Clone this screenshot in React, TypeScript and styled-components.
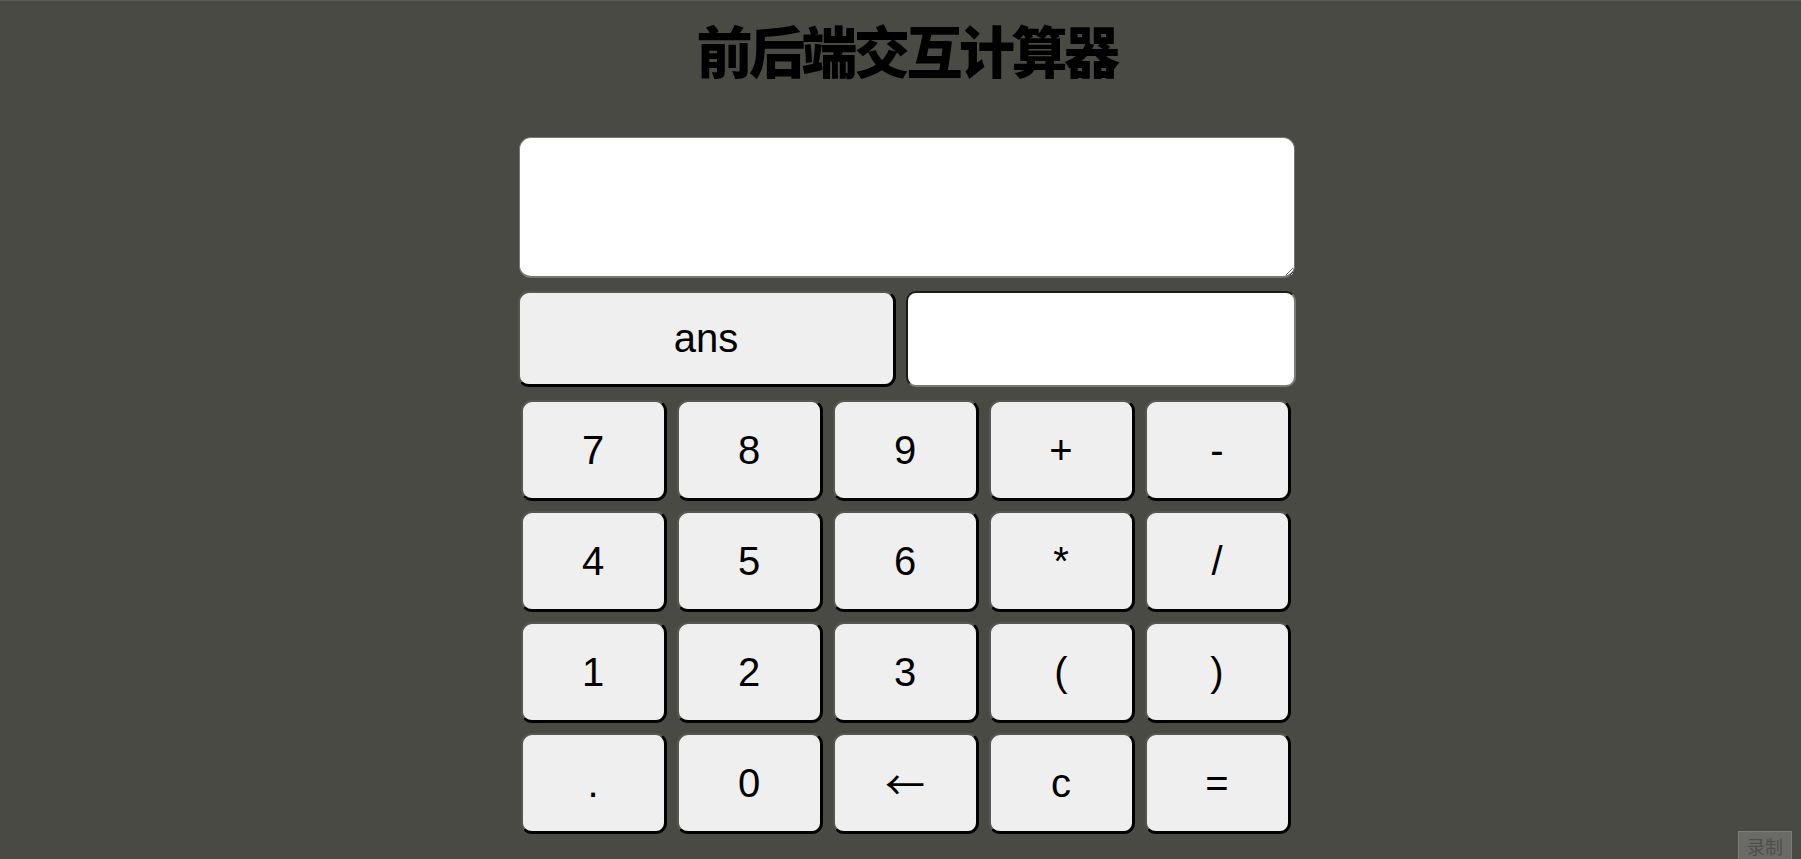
import styled, { createGlobalStyle } from 'styled-components';

const GlobalStyle = createGlobalStyle`
    html, body {
        margin: 0;
        padding: 0;
        height: 100%;
    }
    body {
        background-color: #4a4a45;
        border-top: 1px solid #5c5c57;
        box-sizing: border-box;
        font-family: 'Liberation Sans', Arial, sans-serif;
        overflow: hidden;
    }
`;

const Page = styled.div`
    display: flex;
    flex-direction: column;
    align-items: center;
    padding-left: 12px;
`;

const Title = styled.h1`
    margin: 14px 0 0;
    font-family: 'Noto Sans CJK SC', sans-serif;
    font-size: 56px;
    font-weight: 900;
    line-height: 67px;
    letter-spacing: -3.5px;
    color: #000;
`;

const Calculator = styled.div`
    width: 778px;
    margin-top: 55px;
    display: flex;
    flex-direction: column;
`;

const Screen = styled.textarea`
    box-sizing: border-box;
    width: 776px;
    height: 141px;
    margin-left: 1px;
    border: 1px solid #767676;
    border-bottom-width: 2px;
    border-radius: 12px;
    background: #fff;
    outline: none;
    font-family: 'Liberation Sans', sans-serif;
    font-size: 32px;
`;

const AnsRow = styled.div`
    display: flex;
    gap: 10px;
    margin-top: 13px;
    height: 96px;
`;

const Key = styled.button<{ $wide?: boolean; $symbol?: boolean }>`
    box-sizing: border-box;
    flex-shrink: 0;
    height: ${({ $wide }) => ($wide ? '96px' : '101px')};
    width: ${({ $wide }) => ($wide ? '378px' : '146px')};
    border-style: solid;
    border-width: 2px 3px 3px 2px;
    border-color: #575752 #000 #000 #575752;
    border-radius: 11px;
    background: #efefef;
    color: #000;
    font-family: ${({ $symbol }) =>
        $symbol ? "'Noto Sans CJK SC', 'DejaVu Sans', sans-serif" : "'Liberation Sans', Arial, sans-serif"};
    font-size: 40px;
    padding: 0;
    cursor: pointer;
`;

const AnsField = styled.input`
    box-sizing: border-box;
    flex: 1;
    min-width: 0;
    height: 96px;
    border: 2px solid;
    border-color: #1a1a1a #7a7a76 #7a7a76 #1a1a1a;
    border-radius: 10px;
    background: #fff;
    outline: none;
    font-family: 'Liberation Sans', sans-serif;
    font-size: 40px;
    padding: 0 12px;
`;

const Pad = styled.div`
    display: grid;
    grid-template-columns: repeat(5, 146px);
    grid-auto-rows: 101px;
    gap: 10px;
    margin: 13px 0 0 3px;
`;

const RecordButton = styled.button`
    position: fixed;
    right: 9px;
    bottom: -6px;
    width: 54px;
    height: 34px;
    padding: 0 0 4px;
    border: 1px solid #7c7c78;
    background: #6a6a66;
    color: #4e4e4a;
    font-family: 'Noto Sans CJK SC', sans-serif;
    font-size: 18px;
`;

const keys = ['7', '8', '9', '+', '-', '4', '5', '6', '*', '/', '1', '2', '3', '(', ')', '.', '0', '←', 'c', '='];

export default function App() {
    return (
        <>
            <GlobalStyle />
            <Page>
                <Title>前后端交互计算器</Title>
                <Calculator>
                    <Screen />
                    <AnsRow>
                        <Key $wide>ans</Key>
                        <AnsField />
                    </AnsRow>
                    <Pad>
                        {keys.map((k) => (
                            <Key key={k} $symbol={k === '←'}>
                                {k}
                            </Key>
                        ))}
                    </Pad>
                </Calculator>
            </Page>
            <RecordButton>录制</RecordButton>
        </>
    );
}
